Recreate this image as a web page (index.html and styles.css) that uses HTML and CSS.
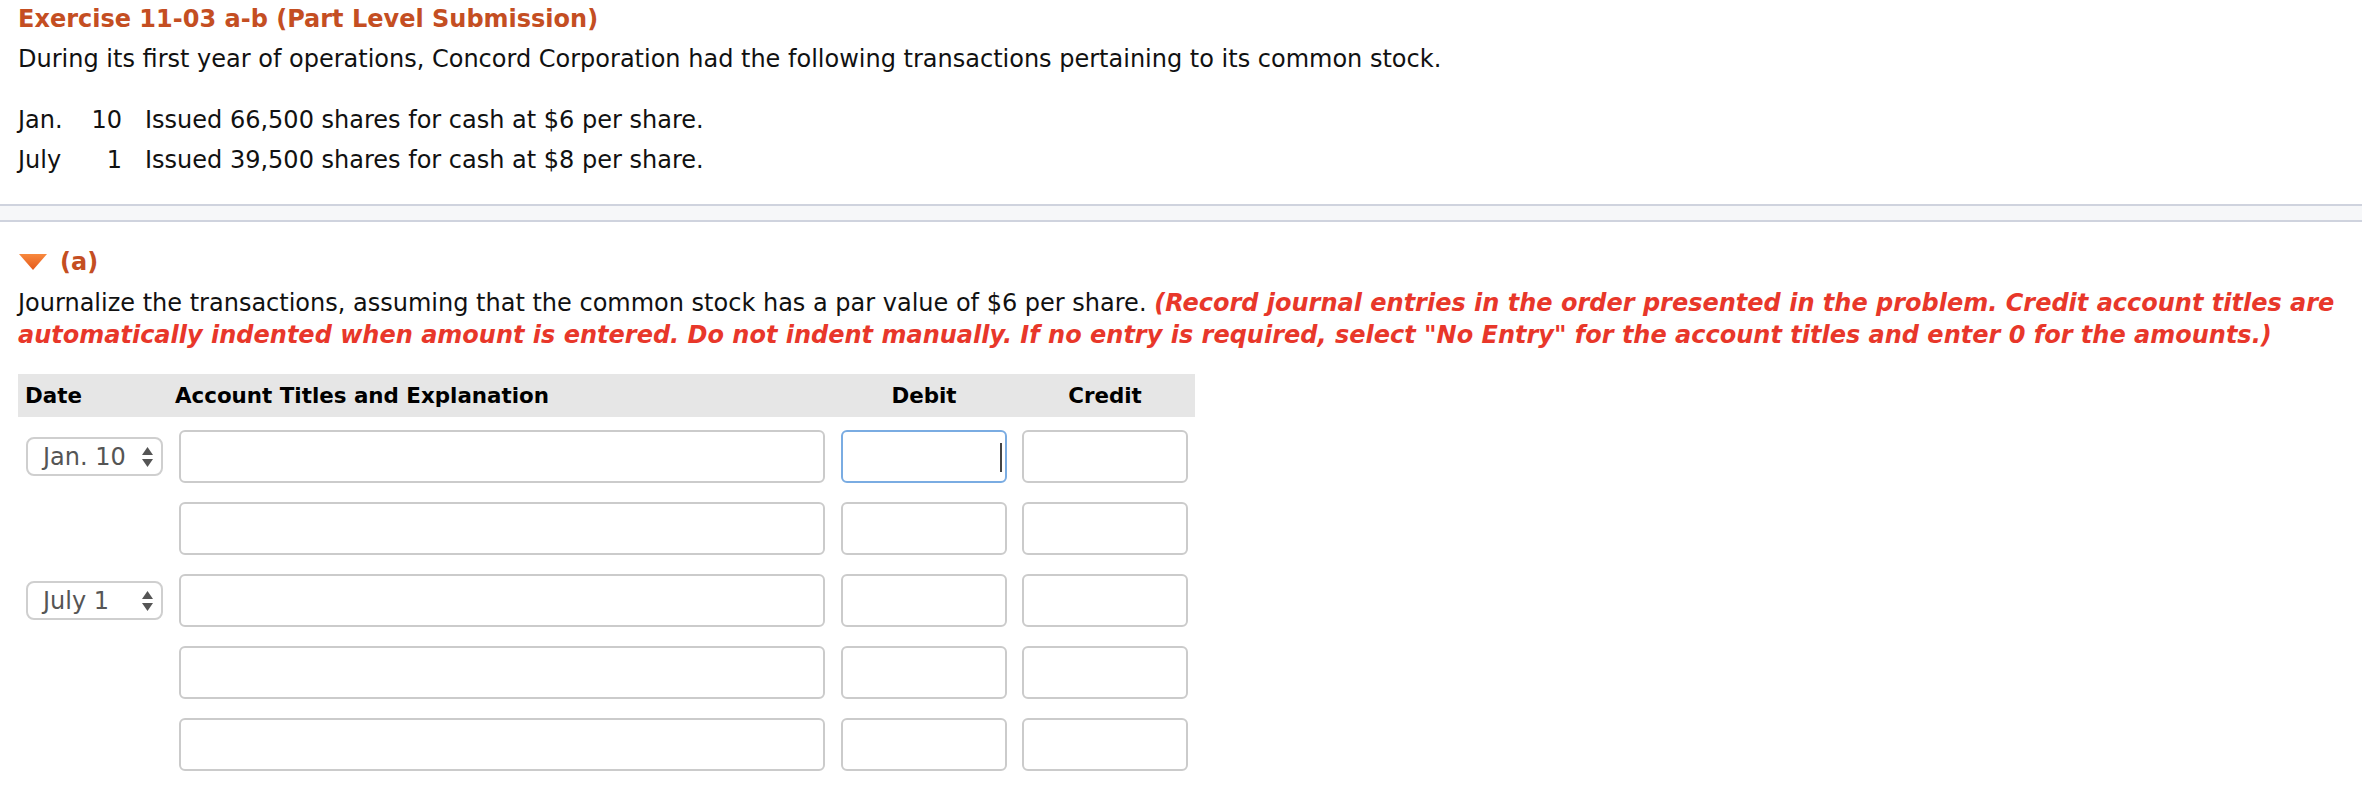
FILE: index.html
```html
<!DOCTYPE html>
<html>
<head>
<meta charset="utf-8">
<link rel="stylesheet" href="styles.css">
</head>
<body>
<div class="intro">
  <h1 class="title">Exercise 11-03 a-b (Part Level Submission)</h1>
  <p class="lead">During its first year of operations, Concord Corporation had the following transactions pertaining to its common stock.</p>
  <div class="tx">
    <span class="m">Jan.</span><span class="d">10</span><span class="desc">Issued 66,500 shares for cash at $6 per share.</span>
    <span class="m">July</span><span class="d">1</span><span class="desc">Issued 39,500 shares for cash at $8 per share.</span>
  </div>
</div>
<div class="band"></div>
<div class="part">
  <div class="part-head">
    <svg class="tri" width="30" height="18" viewBox="0 0 30 18"><defs><linearGradient id="g" x1="0" y1="0" x2="0" y2="1"><stop offset="0" stop-color="#f8893e"/><stop offset="1" stop-color="#e4581a"/></linearGradient></defs><path d="M1 1 H29 L15 17 Z" fill="url(#g)"/></svg>
    <span class="part-label">(a)</span>
  </div>
  <p class="instr">Journalize the transactions, assuming that the common stock has a par value of $6 per share. <em class="note">(Record journal entries in the order presented in the problem. Credit account titles are<br>automatically indented when amount is entered. Do not indent manually. If no entry is required, select "No Entry" for the account titles and enter 0 for the amounts.)</em></p>
  <div class="journal">
    <div class="jhead">
      <div class="h-date">Date</div>
      <div class="h-acct">Account Titles and Explanation</div>
      <div class="h-num">Debit</div>
      <div class="h-num">Credit</div>
    </div>
    <div class="jrow">
      <div class="c-date"><div class="sel"><span>Jan. 10</span><svg class="arr" width="11" height="20" viewBox="0 0 11 20"><path d="M5.5 0 L11 8 H0 Z M0 12 H11 L5.5 20 Z" fill="#555"/></svg></div></div>
      <div class="c-acct"><div class="box"></div></div>
      <div class="c-num"><div class="box focus"><span class="caret"></span></div></div>
      <div class="c-num"><div class="box"></div></div>
    </div>
    <div class="jrow">
      <div class="c-date"></div>
      <div class="c-acct"><div class="box"></div></div>
      <div class="c-num"><div class="box"></div></div>
      <div class="c-num"><div class="box"></div></div>
    </div>
    <div class="jrow">
      <div class="c-date"><div class="sel"><span>July 1</span><svg class="arr" width="11" height="20" viewBox="0 0 11 20"><path d="M5.5 0 L11 8 H0 Z M0 12 H11 L5.5 20 Z" fill="#555"/></svg></div></div>
      <div class="c-acct"><div class="box"></div></div>
      <div class="c-num"><div class="box"></div></div>
      <div class="c-num"><div class="box"></div></div>
    </div>
    <div class="jrow">
      <div class="c-date"></div>
      <div class="c-acct"><div class="box"></div></div>
      <div class="c-num"><div class="box"></div></div>
      <div class="c-num"><div class="box"></div></div>
    </div>
    <div class="jrow">
      <div class="c-date"></div>
      <div class="c-acct"><div class="box"></div></div>
      <div class="c-num"><div class="box"></div></div>
      <div class="c-num"><div class="box"></div></div>
    </div>
  </div>
</div>
</body>
</html>
```
FILE: styles.css
```css
html, body {
  margin: 0;
  padding: 0;
  background: #fff;
}
body {
  font-family: "DejaVu Sans", Verdana, sans-serif;
  font-size: 24px;
  color: #111;
}
.intro {
  padding: 1px 18px 0;
}
.title {
  margin: 0;
  font-size: 24px;
  line-height: 36px;
  font-weight: bold;
  color: #c44e22;
}
.lead {
  margin: 4px 0 0;
  line-height: 36px;
}
.tx {
  margin-top: 23px;
  display: grid;
  grid-template-columns: 72px 32px 1fr;
  line-height: 40px;
}
.tx .d {
  text-align: right;
}
.tx .desc {
  padding-left: 23px;
}
.band {
  margin-top: 24px;
  height: 14px;
  background: #f6f7f9;
  border-top: 2px solid #cfd3de;
  border-bottom: 2px solid #cfd3de;
}
.part {
  padding: 0 18px;
}
.part-head {
  margin-top: 22px;
  display: flex;
  align-items: center;
  gap: 12px;
  height: 36px;
}
.tri {
  display: block;
}
.part-label {
  font-weight: bold;
  color: #c44e22;
}
.instr {
  margin: 7px 0 0;
  line-height: 32px;
}
.note {
  font-weight: bold;
  font-style: italic;
  color: #e8372a;
}
.journal {
  margin-top: 23px;
  width: 1177px;
}
.jhead {
  display: grid;
  grid-template-columns: 153px 662px 182px 180px;
  height: 43px;
  align-items: center;
  background: #e6e6e6;
  font-weight: bold;
  font-size: 21.4px;
  color: #000;
}
.h-date {
  padding-left: 7px;
}
.h-acct {
  padding-left: 4px;
}
.h-num {
  text-align: center;
}
.jrow {
  display: grid;
  grid-template-columns: 153px 662px 182px 180px;
  height: 53px;
  margin-top: 19px;
  align-items: center;
}
.jhead + .jrow {
  margin-top: 13px;
}
.c-date, .c-acct, .c-num {
  padding: 0 8px;
  height: 53px;
  display: flex;
  align-items: center;
}
.c-num:last-child {
  padding: 0 7px;
}
.box {
  box-sizing: border-box;
  width: 100%;
  height: 53px;
  border: 2px solid #cbcbcb;
  border-radius: 6px;
  background: #fff;
  position: relative;
}
.box.focus {
  border-color: #7aace2;
}
.caret {
  position: absolute;
  right: 3px;
  top: 11px;
  width: 2px;
  height: 29px;
  background: #444;
}
.sel {
  box-sizing: border-box;
  width: 137px;
  height: 39px;
  border: 2px solid #cfcfcf;
  border-radius: 8px;
  background: #fff;
  display: flex;
  align-items: center;
  justify-content: space-between;
  padding: 0 8px 0 15px;
  color: #555;
}
.arr {
  display: block;
}
```
